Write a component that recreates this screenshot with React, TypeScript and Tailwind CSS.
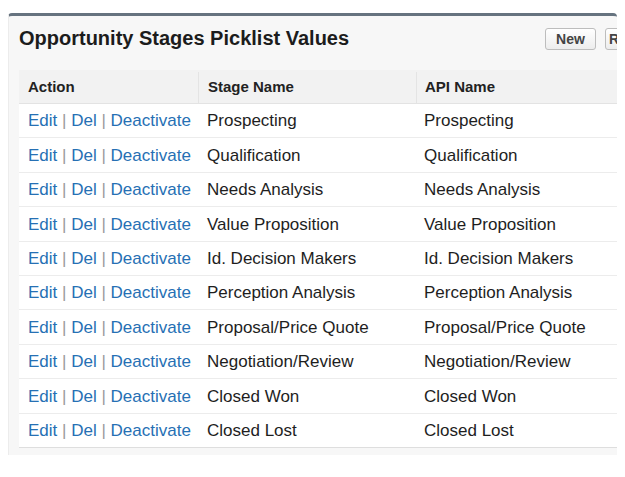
import React from "react";

const stages = [
  "Prospecting",
  "Qualification",
  "Needs Analysis",
  "Value Proposition",
  "Id. Decision Makers",
  "Perception Analysis",
  "Proposal/Price Quote",
  "Negotiation/Review",
  "Closed Won",
  "Closed Lost",
];

function ActionLinks() {
  return (
    <span className="whitespace-nowrap">
      <a className="text-[#2670b4]" href="#">Edit</a>
      <span className="text-[#9a9a9a]"> | </span>
      <a className="text-[#2670b4]" href="#">Del</a>
      <span className="text-[#9a9a9a]"> | </span>
      <a className="text-[#2670b4]" href="#">Deactivate</a>
    </span>
  );
}

export default function App() {
  return (
    <div
      className="min-h-[477px] w-[625px] bg-white pl-[8px] pt-[13px]"
      style={{ fontFamily: '"Liberation Sans", Arial, sans-serif' }}
    >
      <div className="w-[609px] overflow-hidden rounded-t-[4px] border-t-[3px] border-l border-[#66737f] border-l-[#ececec] bg-[#f7f7f7] pb-[7px] pl-[10px]">
        <div className="flex h-[44px] items-center justify-between">
          <h2 className="text-[20px] font-bold text-[#1c1c1c]">
            Opportunity Stages Picklist Values
          </h2>
          <div className="mr-[-48px] flex items-center gap-[9px] self-start pt-[12px]">
            <button className="h-[22px] w-[51px] rounded-[3px] border border-[#bdbdbd] bg-gradient-to-b from-white to-[#ededed] text-[14px] font-bold text-[#444]">
              New
            </button>
            <button className="h-[22px] w-[60px] rounded-[3px] border border-[#bdbdbd] bg-gradient-to-b from-white to-[#ededed] pl-[3px] text-left text-[14px] font-bold text-[#444]">
              Reorder
            </button>
          </div>
        </div>
        <div className="mt-[10px] w-[640px] bg-white">
          <div className="flex h-[34px] items-center border-b border-[#e3e3e3] bg-[#f2f2f2] pt-[2px] text-[15px] font-bold text-[#222]">
            <div className="flex h-full w-[179px] items-center pl-[9px]">Action</div>
            <div className="flex h-full w-[218px] items-center border-l border-[#e4e4e4] pl-[9px]">Stage Name</div>
            <div className="flex h-full flex-1 items-center border-l border-[#e4e4e4] pl-[8px]">API Name</div>
          </div>
          {stages.map((s, i) => (
            <div
              key={s}
              className={`flex h-[34.4px] items-center pt-[1px] text-[17px] text-[#1e1e1e] ${i < stages.length - 1 ? "border-b border-[#ececec]" : "border-b border-[#dedede]"}`}
            >
              <div className="w-[179px] pl-[9px]">
                <ActionLinks />
              </div>
              <div className="w-[218px] pl-[9px]">{s}</div>
              <div className="flex-1 pl-[8px]">{s}</div>
            </div>
          ))}
        </div>
      </div>
    </div>
  );
}
